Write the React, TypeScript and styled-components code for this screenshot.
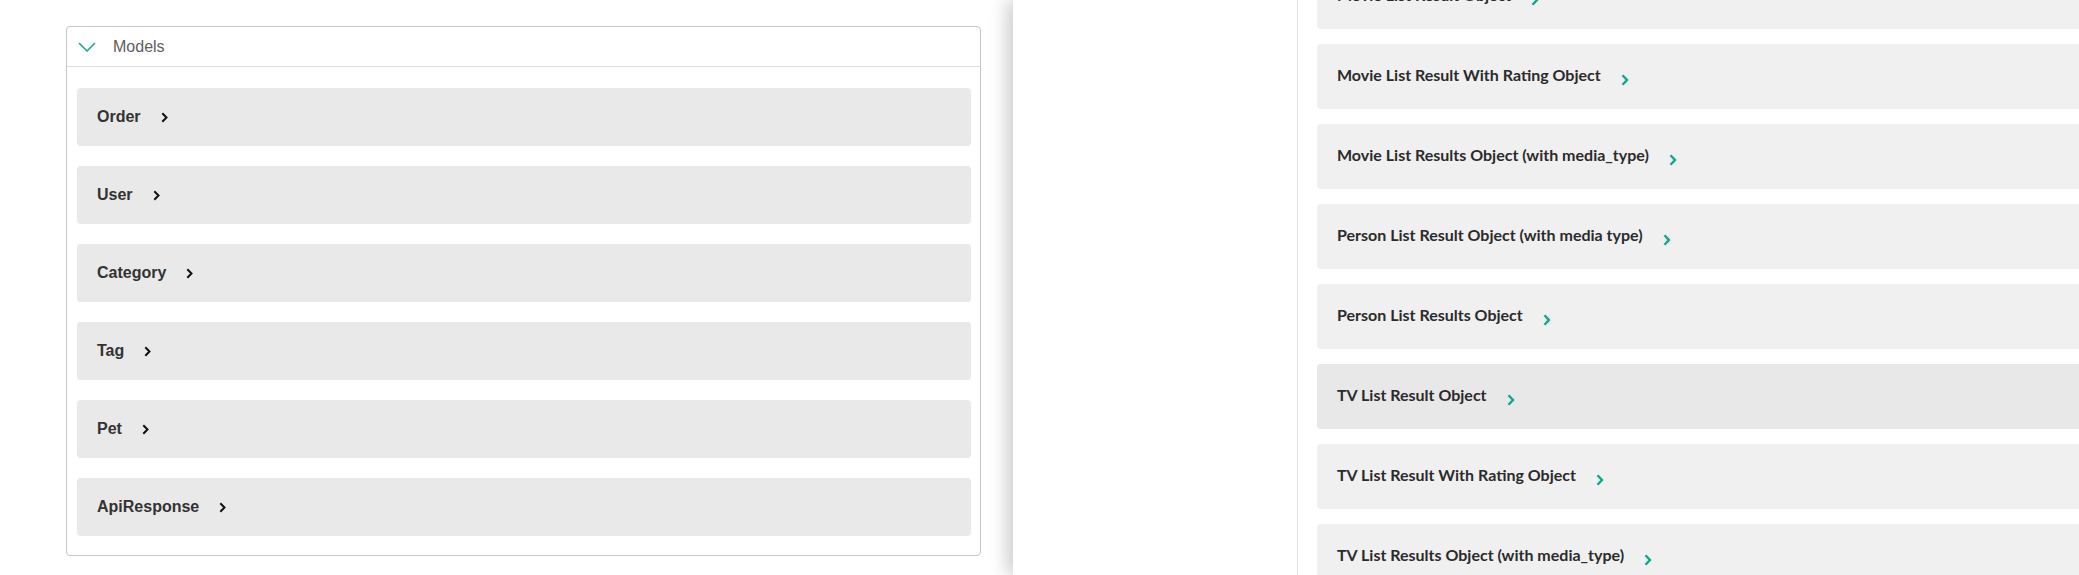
import styled, { createGlobalStyle } from "styled-components";

const GlobalStyle = createGlobalStyle`
  html, body {
    margin: 0;
    padding: 0;
    background: #fff;
    overflow: hidden;
  }
  * {
    box-sizing: border-box;
  }
`;

const Page = styled.div`
  display: flex;
  height: 575px;
  overflow: hidden;
`;

const LeftPane = styled.div`
  width: 1013px;
  flex-shrink: 0;
  padding: 26px 32px 0 66px;
  font-family: "Liberation Sans", Arial, sans-serif;
`;

const ModelsSection = styled.section`
  width: 915px;
  border: 1px solid #c6c6c6;
  border-radius: 4px;
`;

const ModelsHeader = styled.h4`
  margin: 0;
  height: 40px;
  display: flex;
  align-items: center;
  gap: 17px;
  padding-left: 11px;
  border-bottom: 1px solid #dedede;
  font-size: 16px;
  font-weight: 400;
  color: #606060;
`;

const ModelList = styled.div`
  display: flex;
  flex-direction: column;
  gap: 20px;
  padding: 21px 9px 19px 10px;
`;

const ModelRow = styled.div`
  height: 58px;
  display: flex;
  align-items: center;
  gap: 20px;
  padding-left: 20px;
  background: #e9e9e9;
  border-radius: 4px;
  font-size: 16px;
  font-weight: 700;
  color: #333;
`;

const RightPane = styled.div`
  flex: 1;
  display: flex;
  position: relative;
  z-index: 1;
  background: #fff;
  box-shadow: -5px 0 18px rgba(0, 0, 0, 0.22);
`;

const Sidebar = styled.div`
  width: 284px;
  flex-shrink: 0;
`;

const Main = styled.div`
  flex: 1;
  display: flex;
  flex-direction: column;
  gap: 15px;
  margin-top: -36px;
  padding-left: 19px;
  border-left: 1px solid #e3e3e3;
  font-family: Lato, "Open Sans", sans-serif;
`;

const SchemaRow = styled.div<{ $active?: boolean }>`
  width: 900px;
  height: 65px;
  flex-shrink: 0;
  display: flex;
  align-items: center;
  gap: 20px;
  padding: 0 0 5px 20px;
  background: ${(p) => (p.$active ? "#e8e8e8" : "#f0f0f0")};
  border-radius: 4px;
  font-size: 16px;
  font-weight: 700;
  color: #2b2b2b;

  svg {
    margin-top: 12px;
  }
`;

const ChevronDown = () => (
  <svg width="18" height="10" viewBox="0 0 18 10" fill="none">
    <path d="M1 1L9 9L17 1" stroke="#22a78f" strokeWidth="1.6" />
  </svg>
);

const SmallChevron = () => (
  <svg width="7" height="11" viewBox="0 0 7 11" fill="none">
    <path d="M1.3 1.2L5.5 5.5L1.3 9.8" stroke="#111" strokeWidth="2" />
  </svg>
);

const GreenChevron = () => (
  <svg width="8" height="12" viewBox="0 0 8 12" fill="none">
    <path d="M1.5 1.2L6 6L1.5 10.8" stroke="#10a68e" strokeWidth="2.4" />
  </svg>
);

const models = ["Order", "User", "Category", "Tag", "Pet", "ApiResponse"];

const schemas = [
  "Movie List Result Object",
  "Movie List Result With Rating Object",
  "Movie List Results Object (with media_type)",
  "Person List Result Object (with media type)",
  "Person List Results Object",
  "TV List Result Object",
  "TV List Result With Rating Object",
  "TV List Results Object (with media_type)",
];

export default function App() {
  return (
    <>
      <GlobalStyle />
      <Page>
        <LeftPane>
          <ModelsSection>
            <ModelsHeader>
              <ChevronDown />
              <span>Models</span>
            </ModelsHeader>
            <ModelList>
              {models.map((m) => (
                <ModelRow key={m}>
                  <span>{m}</span>
                  <SmallChevron />
                </ModelRow>
              ))}
            </ModelList>
          </ModelsSection>
        </LeftPane>
        <RightPane>
          <Sidebar />
          <Main>
            {schemas.map((s) => (
              <SchemaRow key={s} $active={s === "TV List Result Object"}>
                <span>{s}</span>
                <GreenChevron />
              </SchemaRow>
            ))}
          </Main>
        </RightPane>
      </Page>
    </>
  );
}
